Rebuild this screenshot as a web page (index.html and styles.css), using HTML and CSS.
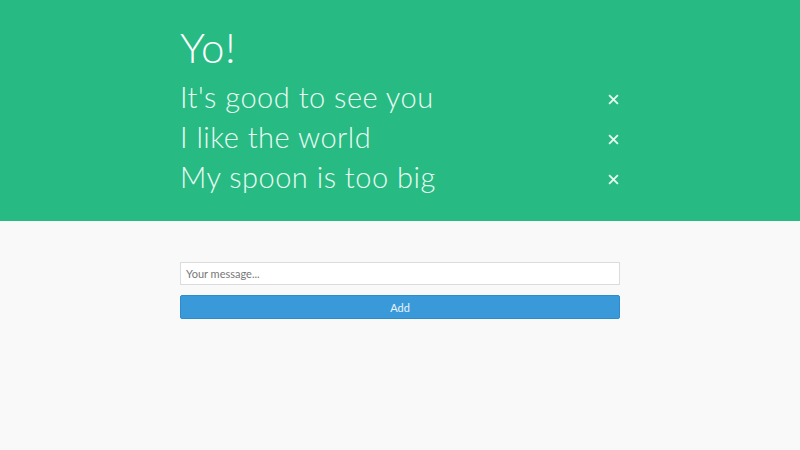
FILE: index.html
```html
<!DOCTYPE html>
<html>
<head>
<meta charset="utf-8">
<link rel="stylesheet" href="styles.css">
</head>
<body>
<header class="hero">
  <div class="wrap">
    <h1 class="title">Yo!</h1>
    <ul class="list">
      <li class="item"><span>It's good to see you</span><svg class="close" viewBox="0 0 10 10"><path d="M1 1L9 9M9 1L1 9"/></svg></li>
      <li class="item"><span>I like the world</span><svg class="close" viewBox="0 0 10 10"><path d="M1 1L9 9M9 1L1 9"/></svg></li>
      <li class="item"><span>My spoon is too big</span><svg class="close" viewBox="0 0 10 10"><path d="M1 1L9 9M9 1L1 9"/></svg></li>
    </ul>
  </div>
</header>
<main class="wrap form">
  <input class="field" type="text" placeholder="Your message...">
  <button class="btn">Add</button>
</main>
</body>
</html>
```
FILE: styles.css
```css
html, body { margin: 0; padding: 0; }
body {
  background: #f9f9f9;
  font-family: Lato, "Open Sans", sans-serif;
  font-weight: 300;
  width: 800px;
  height: 450px;
  overflow: hidden;
}
.wrap { width: 440px; margin: 0 auto; }
.hero { background: #27bb83; color: #fff; height: 221px; box-sizing: border-box; padding-top: 21px; }
.title { margin: 0; font-size: 42px; font-weight: 300; line-height: 52px; letter-spacing: 0.5px; }
.list { list-style: none; margin: 4px 0 0; padding: 0; }
.item {
  display: flex; justify-content: space-between; align-items: center;
  font-size: 29px; line-height: 40px; color: #eafaf3; letter-spacing: 0.5px;
}
.close {
  width: 11px; height: 11px; margin-right: 1px; margin-top: 4px;
  fill: none; stroke: #e6f8f0; stroke-width: 1.7;
}
.form { padding-top: 41px; display: flex; flex-direction: column; gap: 10px; }
.field {
  box-sizing: border-box; width: 440px; height: 23px; margin: 0;
  border: 1px solid #dcdcdc; background: #fff; padding: 0 5px;
  font-family: Lato, sans-serif; font-weight: 400; font-size: 11px; color: #333;
  outline: none;
}
.field::placeholder { color: #777; }
.btn {
  box-sizing: border-box; width: 440px; height: 24px; margin: 0;
  border: 1px solid #2f8ccb; border-radius: 2px; background: #3a9ad9; color: #e8f3fb;
  font-family: Lato, sans-serif; font-weight: 400; font-size: 11px; padding: 0;
}
```
